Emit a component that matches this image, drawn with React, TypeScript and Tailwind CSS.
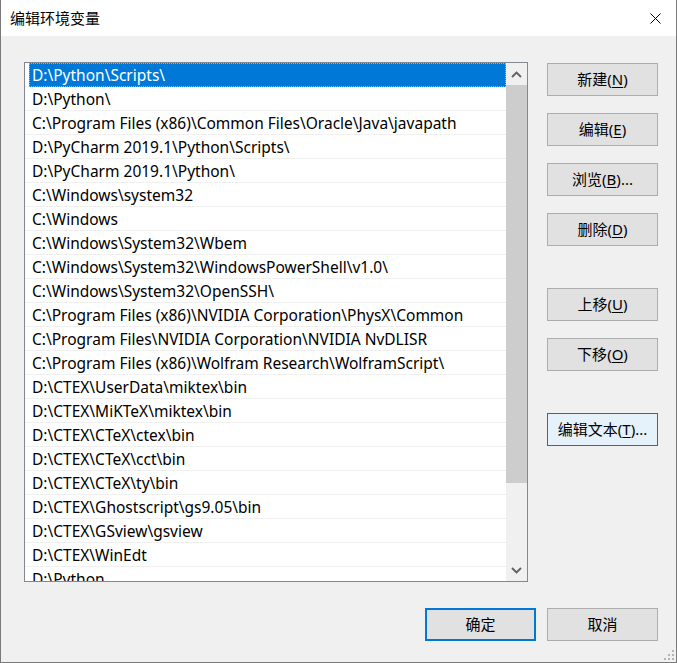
import React from 'react';

const paths = [
  'D:\\Python\\Scripts\\',
  'D:\\Python\\',
  'C:\\Program Files (x86)\\Common Files\\Oracle\\Java\\javapath',
  'D:\\PyCharm 2019.1\\Python\\Scripts\\',
  'D:\\PyCharm 2019.1\\Python\\',
  'C:\\Windows\\system32',
  'C:\\Windows',
  'C:\\Windows\\System32\\Wbem',
  'C:\\Windows\\System32\\WindowsPowerShell\\v1.0\\',
  'C:\\Windows\\System32\\OpenSSH\\',
  'C:\\Program Files (x86)\\NVIDIA Corporation\\PhysX\\Common',
  'C:\\Program Files\\NVIDIA Corporation\\NVIDIA NvDLISR',
  'C:\\Program Files (x86)\\Wolfram Research\\WolframScript\\',
  'D:\\CTEX\\UserData\\miktex\\bin',
  'D:\\CTEX\\MiKTeX\\miktex\\bin',
  'D:\\CTEX\\CTeX\\ctex\\bin',
  'D:\\CTEX\\CTeX\\cct\\bin',
  'D:\\CTEX\\CTeX\\ty\\bin',
  'D:\\CTEX\\Ghostscript\\gs9.05\\bin',
  'D:\\CTEX\\GSview\\gsview',
  'D:\\CTEX\\WinEdt',
  'D:\\Python',
];

const font = { fontFamily: '"Noto Sans", "Noto Sans CJK SC", sans-serif' };

function Btn({ label, keyChar, tail = '', variant = 'normal', className = '' }: { label: string; keyChar?: string; tail?: string; variant?: 'normal' | 'hover' | 'default'; className?: string }) {
  const styles =
    variant === 'hover'
      ? 'border border-[#0078d7] bg-[#e5f1fb]'
      : variant === 'default'
      ? 'border-2 border-[#0078d7] bg-[#e1e1e1]'
      : 'border border-[#adadad] bg-[#e1e1e1]';
  return (
    <div className={`flex h-[33px] w-[111px] items-center justify-center text-[15px] text-black ${styles} ${className}`}>
      <span>
        {label}
        {keyChar && (
          <>
            (<span className="underline underline-offset-2">{keyChar}</span>)
          </>
        )}
        {tail}
      </span>
    </div>
  );
}

function Chevron({ up }: { up?: boolean }) {
  return (
    <svg width="11" height="7" viewBox="0 0 11 7" className="block">
      <path d={up ? 'M1 6 L5.5 1.5 L10 6' : 'M1 1 L5.5 5.5 L10 1'} fill="none" stroke="#606060" strokeWidth="1.8" />
    </svg>
  );
}

export default function App() {
  return (
    <div className="flex h-[663px] w-[677px] flex-col overflow-hidden border-x border-b border-[#7a7a7a] bg-[#f0f0f0]" style={font}>
      <div className="flex h-[36px] items-center justify-between bg-white pl-[9px] pr-[15px]">
        <span className="text-[15px] text-black">编辑环境变量</span>
        <svg width="11" height="11" viewBox="0 0 11 11">
          <path d="M0.5 0.5 L10.5 10.5 M10.5 0.5 L0.5 10.5" stroke="#000" strokeWidth="1" />
        </svg>
      </div>

      <div className="relative flex flex-1 flex-col pl-[23px] pr-[18px] pt-[26px]">
        <div className="flex gap-[19px]">
          <div className="flex h-[520px] w-[504px] border border-[#828790] bg-white">
            <div className="h-full w-[481px] overflow-hidden">
              {paths.map((p, i) => (
                <div key={i} className="h-[24px] border-b border-[#f0f0f0]">
                  {i === 0 ? (
                    <div className="ml-[4px] flex h-[24px] items-center border border-dotted border-[#f5a04f] bg-[#0078d7] pl-[2px] pt-[2px] text-[15.5px] text-white">
                      {p}
                    </div>
                  ) : (
                    <div className="flex h-[23px] items-center pl-[7px] pt-[2px] text-[15.5px] text-black">{p}</div>
                  )}
                </div>
              ))}
            </div>
            <div className="flex w-[21px] flex-col bg-[#f0f0f0]">
              <div className="flex h-[22px] items-center justify-center">
                <Chevron up />
              </div>
              <div className="h-[398px] bg-[#cdcdcd]" />
              <div className="flex-1" />
              <div className="flex h-[22px] items-center justify-center">
                <Chevron />
              </div>
            </div>
          </div>

          <div className="flex flex-col pt-[1px]">
            <Btn label="新建" keyChar="N" />
            <Btn label="编辑" keyChar="E" className="mt-[17px]" />
            <Btn label="浏览" keyChar="B" tail="..." className="mt-[17px]" />
            <Btn label="删除" keyChar="D" className="mt-[17px]" />
            <Btn label="上移" keyChar="U" className="mt-[42px]" />
            <Btn label="下移" keyChar="O" className="mt-[17px]" />
            <Btn label="编辑文本" keyChar="T" tail="..." variant="hover" className="mt-[42px]" />
          </div>
        </div>

        <div className="mt-[26px] flex justify-end gap-[11px]">
          <Btn label="确定" variant="default" />
          <Btn label="取消" />
        </div>

        <svg className="absolute bottom-[1px] right-[1px]" width="11" height="11" viewBox="0 0 11 11">
          <g fill="#b4b4b4">
            <rect x="8" y="0" width="2" height="2" />
            <rect x="4" y="4" width="2" height="2" />
            <rect x="8" y="4" width="2" height="2" />
            <rect x="0" y="8" width="2" height="2" />
            <rect x="4" y="8" width="2" height="2" />
            <rect x="8" y="8" width="2" height="2" />
          </g>
        </svg>
      </div>
    </div>
  );
}
